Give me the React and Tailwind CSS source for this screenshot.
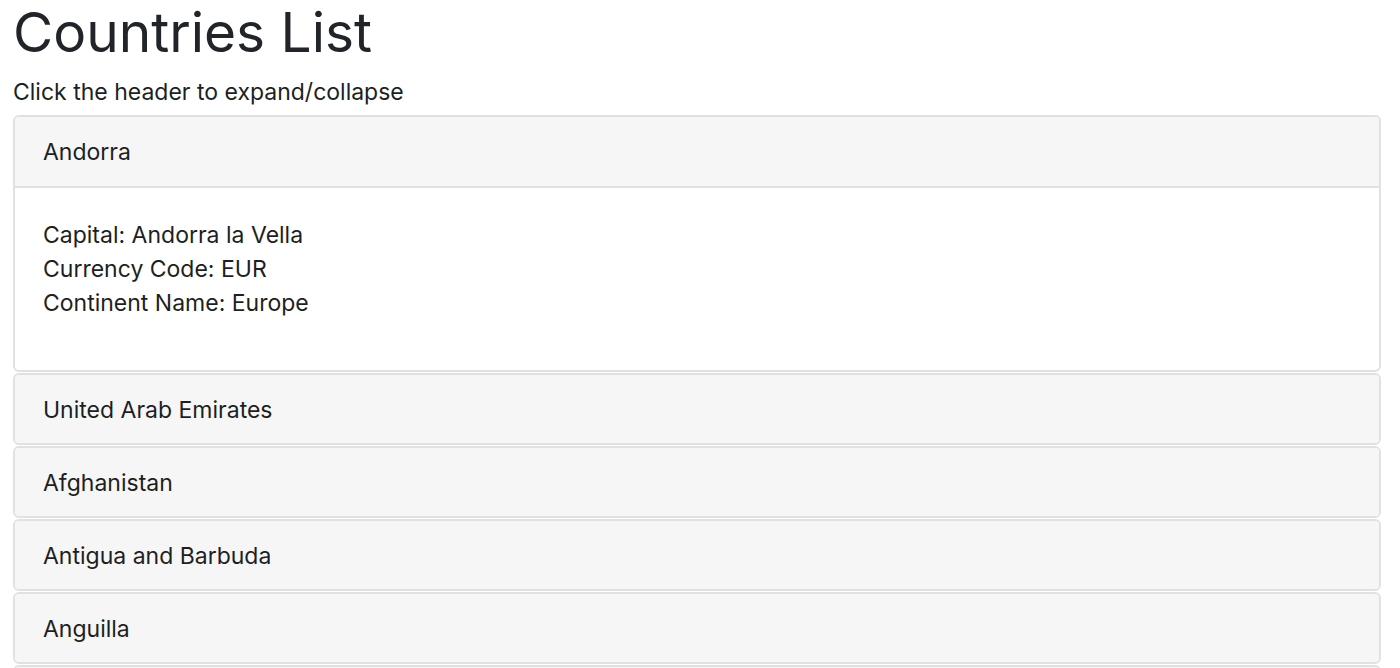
import React, { useState } from 'react';

const countries = [
  { name: 'Andorra', capital: 'Andorra la Vella', currency: 'EUR', continent: 'Europe' },
  { name: 'United Arab Emirates', capital: 'Abu Dhabi', currency: 'AED', continent: 'Asia' },
  { name: 'Afghanistan', capital: 'Kabul', currency: 'AFN', continent: 'Asia' },
  { name: 'Antigua and Barbuda', capital: "St. John's", currency: 'XCD', continent: 'North America' },
  { name: 'Anguilla', capital: 'The Valley', currency: 'XCD', continent: 'North America' },
  { name: 'Albania', capital: 'Tirana', currency: 'ALL', continent: 'Europe' },
];

const CountryCard = ({ country, open, onToggle }) => (
  <div className="border-2 border-[#e1e1e1] rounded-[6px] bg-white overflow-hidden">
    <div
      onClick={onToggle}
      className={`flex items-center px-[28px] pt-[2px] bg-[#f6f6f6] cursor-pointer ${open ? 'h-[71px] border-b-2 border-[#e1e1e1]' : 'h-[68px]'}`}
    >
      {country.name}
    </div>
    {open && (
      <div className="h-[182px] px-[28px] pt-[30px] leading-[34px]">
        <div>Capital: {country.capital}</div>
        <div>Currency Code: {country.currency}</div>
        <div>Continent Name: {country.continent}</div>
      </div>
    )}
  </div>
);

const App = () => {
  const [openIdx, setOpenIdx] = useState(0);

  return (
    <div className="min-h-screen bg-white px-[13px] text-[#1d1f22] text-[23px]" style={{ fontFamily: 'Inter, "Liberation Sans", sans-serif' }}>
      <h1 className="text-[55px] leading-[62px] pt-[1px] text-[#212529]">Countries List</h1>
      <p className="mt-[15px] leading-[28px] text-[#1d1f22]">Click the header to expand/collapse</p>
      <div className="mt-[9px] mr-[6px] flex flex-col gap-px">
        {countries.map((c, i) => (
          <CountryCard
            key={c.name}
            country={c}
            open={openIdx === i}
            onToggle={() => setOpenIdx(openIdx === i ? -1 : i)}
          />
        ))}
      </div>
    </div>
  );
};

export default App;
